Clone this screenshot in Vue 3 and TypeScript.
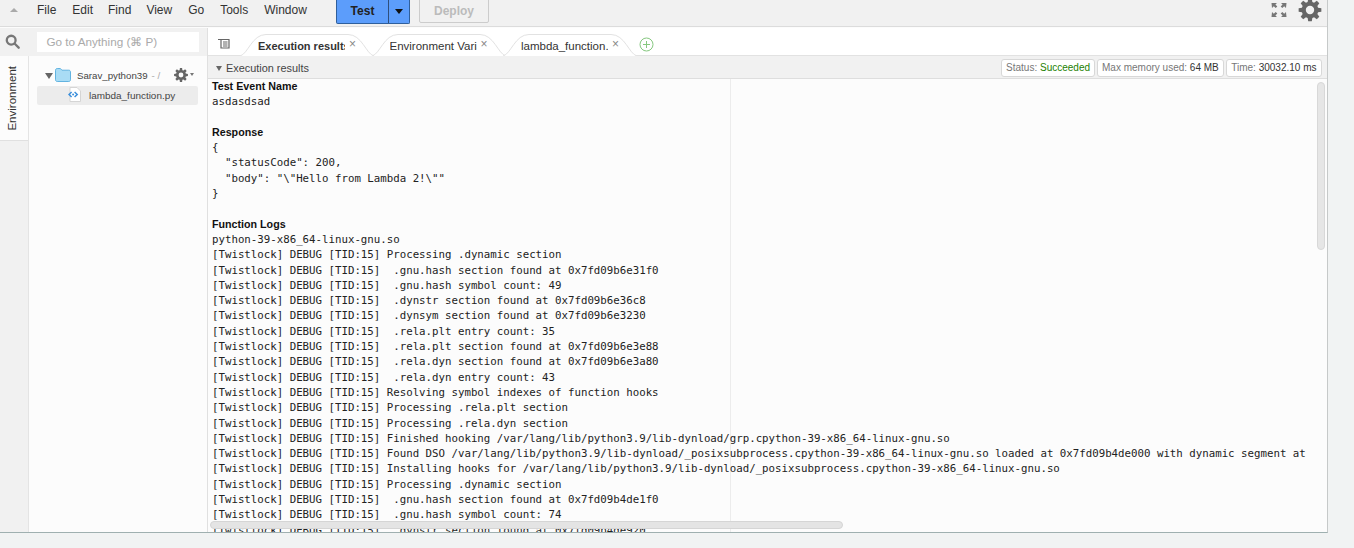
<script setup lang="ts">
const menus = ['File', 'Edit', 'Find', 'View', 'Go', 'Tools', 'Window']
const tabs = [
  { label: 'Execution results', active: true },
  { label: 'Environment Variables', active: false },
  { label: 'lambda_function.py', active: false },
]
const lines = [
  'python-39-x86_64-linux-gnu.so',
  '[Twistlock] DEBUG [TID:15] Processing .dynamic section',
  '[Twistlock] DEBUG [TID:15]  .gnu.hash section found at 0x7fd09b6e31f0',
  '[Twistlock] DEBUG [TID:15]  .gnu.hash symbol count: 49',
  '[Twistlock] DEBUG [TID:15]  .dynstr section found at 0x7fd09b6e36c8',
  '[Twistlock] DEBUG [TID:15]  .dynsym section found at 0x7fd09b6e3230',
  '[Twistlock] DEBUG [TID:15]  .rela.plt entry count: 35',
  '[Twistlock] DEBUG [TID:15]  .rela.plt section found at 0x7fd09b6e3e88',
  '[Twistlock] DEBUG [TID:15]  .rela.dyn section found at 0x7fd09b6e3a80',
  '[Twistlock] DEBUG [TID:15]  .rela.dyn entry count: 43',
  '[Twistlock] DEBUG [TID:15] Resolving symbol indexes of function hooks',
  '[Twistlock] DEBUG [TID:15] Processing .rela.plt section',
  '[Twistlock] DEBUG [TID:15] Processing .rela.dyn section',
  '[Twistlock] DEBUG [TID:15] Finished hooking /var/lang/lib/python3.9/lib-dynload/grp.cpython-39-x86_64-linux-gnu.so',
  '[Twistlock] DEBUG [TID:15] Found DSO /var/lang/lib/python3.9/lib-dynload/_posixsubprocess.cpython-39-x86_64-linux-gnu.so loaded at 0x7fd09b4de000 with dynamic segment at 0x7fd09b4e1d50',
  '[Twistlock] DEBUG [TID:15] Installing hooks for /var/lang/lib/python3.9/lib-dynload/_posixsubprocess.cpython-39-x86_64-linux-gnu.so',
  '[Twistlock] DEBUG [TID:15] Processing .dynamic section',
  '[Twistlock] DEBUG [TID:15]  .gnu.hash section found at 0x7fd09b4de1f0',
  '[Twistlock] DEBUG [TID:15]  .gnu.hash symbol count: 74',
  '[Twistlock] DEBUG [TID:15]  .dynstr section found at 0x7fd09b4de920',
]
const response = '{\n  "statusCode": 200,\n  "body": "\\"Hello from Lambda 2!\\""\n}'

function gearPath(cx: number, cy: number, outer: number, inner: number, hole: number, teeth: number): string {
  const pts: string[] = []
  const step = (Math.PI * 2) / teeth
  for (let i = 0; i < teeth; i++) {
    const a = i * step - Math.PI / 2
    const seq: [number, number][] = [
      [inner, a - step * 0.36],
      [outer, a - step * 0.2],
      [outer, a + step * 0.2],
      [inner, a + step * 0.36],
    ]
    for (const [r, t] of seq) {
      pts.push(`${(cx + r * Math.cos(t)).toFixed(2)} ${(cy + r * Math.sin(t)).toFixed(2)}`)
    }
  }
  const ring = `M${cx - hole} ${cy}a${hole} ${hole} 0 1 0 ${hole * 2} 0a${hole} ${hole} 0 1 0 ${-hole * 2} 0Z`
  return `M${pts.join('L')}Z${ring}`
}
const bigGear = gearPath(12, 12, 11.5, 8.4, 4.2, 8)
const smallGear = gearPath(7, 7, 7, 5, 2.4, 8)
</script>

<template>
  <div class="page">
    <div class="window">
      <header class="menubar">
        <span class="collapse"></span>
        <nav class="menus">
          <span v-for="m in menus" :key="m" class="menu">{{ m }}</span>
        </nav>
        <div class="test-group">
          <button class="test-btn">Test</button>
          <button class="test-caret"><span></span></button>
        </div>
        <button class="deploy">Deploy</button>
        <div class="spacer"></div>
        <svg class="fullscreen" width="16" height="16" viewBox="0 0 16 16" fill="#777">
          <path d="M0.5 1H6L4.4 2.6 6.3 4.5 4.7 6.1 2.8 4.2 1 6ZM15.5 1H10L11.6 2.6 9.7 4.5 11.3 6.1 13.2 4.2 15 6ZM0.5 15H6L4.4 13.4 6.3 11.5 4.7 9.9 2.8 11.8 1 10ZM15.5 15H10L11.6 13.4 9.7 11.5 11.3 9.9 13.2 11.8 15 10Z" />
        </svg>
        <svg class="settings" width="24" height="24" viewBox="0 0 24 24">
          <path :d="bigGear" fill="#666" fill-rule="evenodd" />
        </svg>
      </header>

      <div class="workspace">
        <aside class="sidebar">
          <div class="search-row">
            <div class="search-icon">
              <svg width="15" height="15" viewBox="0 0 17 17" fill="none" stroke="#777" stroke-width="2.6">
                <circle cx="7" cy="7" r="5" />
                <path d="M10.8 10.8L15.5 15.5" stroke-linecap="round" />
              </svg>
            </div>
            <div class="goto">Go to Anything (⌘ P)</div>
          </div>
          <div class="side-body">
            <div class="rail">
              <div class="env-tab"><span>Environment</span></div>
            </div>
            <div class="tree">
              <div class="tree-root">
                <span class="tree-caret"></span>
                <svg class="folder" width="16" height="14" viewBox="0 0 16 14">
                  <path d="M0.5 2.2C0.5 1.2 1.2 0.5 2.2 0.5H5.4L6.9 2.2H13.8C14.8 2.2 15.5 2.9 15.5 3.9V11.8C15.5 12.8 14.8 13.5 13.8 13.5H2.2C1.2 13.5 0.5 12.8 0.5 11.8Z" fill="#a9dcf5" stroke="#62b3e0" />
                </svg>
                <span class="root-name">Sarav_python39</span>
                <span class="root-path">- /</span>
                <svg class="tree-gear" width="14" height="14" viewBox="0 0 14 14">
                  <path :d="smallGear" fill="#666" fill-rule="evenodd" />
                </svg>
                <span class="gear-caret"></span>
              </div>
              <div class="tree-file">
                <svg class="file-icon" width="13" height="15" viewBox="0 0 13 15">
                  <path d="M2 0.5H9L12.5 4V14.5H2Z" fill="#fff" stroke="#d5d5d5" />
                  <path d="M3.6 5L1 7.5 3.6 10M6.6 5L9.2 7.5 6.6 10" fill="none" stroke="#3b8fdc" stroke-width="1.5" />
                  <circle cx="5.1" cy="7.5" r="1" fill="#3b8fdc" />
                </svg>
                <span>lambda_function.py</span>
              </div>
            </div>
          </div>
        </aside>

        <main class="main">
          <div class="tabstrip">
            <svg class="panel-icon" width="12" height="11" viewBox="0 0 12 11" fill="none" stroke="#666">
              <path d="M0 1.5H11.5M3 1.5V10H11V1.5M5 4H9.5M5 6H9.5M5 8H9.5" stroke-width="1.2" />
            </svg>
            <div v-for="t in tabs" :key="t.label" class="tab" :class="{ active: t.active }">
              <svg class="tab-shape" width="134" height="22" viewBox="0 0 134 22">
                <path d="M0 22C8 20 12 0.5 26 0.5H108C122 0.5 126 20 134 22" fill="#fff" stroke="#e2e2e2" />
              </svg>
              <span class="tab-label">{{ t.label }}</span>
              <span class="tab-x">×</span>
            </div>
            <svg class="add-tab" width="15" height="15" viewBox="0 0 15 15" fill="none" stroke="#86c87f">
              <circle cx="7.5" cy="7.5" r="6.5" />
              <path d="M7.5 4V11M4 7.5H11" />
            </svg>
          </div>

          <div class="resultbar">
            <span class="result-caret"></span>
            <span class="result-title">Execution results</span>
            <div class="spacer"></div>
            <div class="badges">
              <span class="badge">Status: <b class="ok">Succeeded</b></span>
              <span class="badge">Max memory used: <b>64 MB</b></span>
              <span class="badge">Time: <b>30032.10 ms</b></span>
            </div>
          </div>

          <div class="output">
            <div class="margin-line"></div>
            <div class="heading">Test Event Name</div>
            <pre class="mono">asdasdsad</pre>
            <div class="heading gap">Response</div>
            <pre class="mono">{{ response }}</pre>
            <div class="heading gap">Function Logs</div>
            <pre v-for="(l, i) in lines" :key="i" class="mono">{{ l }}</pre>
            <div class="vscroll"></div>
            <div class="hscroll"></div>
          </div>
        </main>
      </div>
    </div>
  </div>
</template>

<style>
html, body { margin: 0; padding: 0; overflow: hidden; }
</style>

<style scoped>
.page {
  width: 1354px;
  height: 548px;
  background: #f1f3f3;
  overflow: hidden;
  font-family: "Liberation Sans", Arial, sans-serif;
  color: #222;
}
.window {
  width: 1327px;
  height: 532px;
  box-sizing: content-box;
  border-right: 1px solid #c6c9c9;
  border-bottom: 1px solid #9fb0b0;
  background: #fcfcfc;
  display: flex;
  flex-direction: column;
  overflow: hidden;
}
.spacer { flex: 1; }

.menubar {
  height: 27px;
  flex: none;
  box-sizing: border-box;
  background: #f1f1f1;
  border-bottom: 1px solid #dcdcdc;
  display: flex;
  align-items: flex-start;
  padding-left: 10px;
}
.collapse {
  width: 0;
  height: 0;
  margin-top: 8px;
  border-left: 4px solid transparent;
  border-right: 4px solid transparent;
  border-bottom: 4px solid #aaa;
}
.menus {
  display: flex;
  margin-left: 19px;
  width: 299px;
  font-size: 12px;
  line-height: 20px;
  color: #333;
}
.menu { margin-right: 16px; }
.menu:nth-child(2), .menu:nth-child(3) { margin-right: 15px; }
.test-group {
  display: flex;
  height: 25px;
  margin-top: -1px;
  background: #5c9dfb;
  border: 1px solid #2f5f9c;
  border-top: none;
  border-radius: 0 0 2px 2px;
  box-sizing: border-box;
}
.test-btn {
  width: 52px;
  border: none;
  background: none;
  padding: 0;
  font: bold 12px "Liberation Sans", Arial, sans-serif;
  color: #222;
  border-right: 1px solid #2f4f7c;
}
.test-caret {
  width: 20px;
  border: none;
  background: none;
  padding: 0;
  display: flex;
  align-items: center;
  justify-content: center;
}
.test-caret span {
  width: 0;
  height: 0;
  border-left: 4px solid transparent;
  border-right: 4px solid transparent;
  border-top: 5px solid #111;
}
.deploy {
  width: 70px;
  height: 24px;
  margin-left: 9px;
  margin-top: -1px;
  box-sizing: border-box;
  border: 1px solid #ccc;
  border-radius: 0 0 2px 2px;
  background: #f1f1f1;
  font: bold 12px "Liberation Sans", Arial, sans-serif;
  color: #bbb;
  padding: 0;
}
.fullscreen { margin-top: 2px; margin-right: 11px; }
.settings { margin-top: -2px; margin-right: 5px; }

.workspace {
  flex: 1;
  min-height: 0;
  display: flex;
  margin-top: 1px;
}
.sidebar {
  width: 208px;
  flex: none;
  display: flex;
  flex-direction: column;
  border-right: 1px solid #e0e0e0;
  box-sizing: border-box;
}
.search-row {
  height: 28px;
  flex: none;
  display: flex;
  background: #f1f1f1;
  align-items: flex-start;
}
.search-icon {
  width: 37px;
  padding: 6px 0 0 5px;
  box-sizing: border-box;
  flex: none;
}
.goto {
  width: 162px;
  height: 20px;
  margin-top: 4px;
  background: #fff;
  font-size: 11.7px;
  line-height: 20px;
  color: #aaa;
  padding-left: 9.5px;
  box-sizing: border-box;
}
.side-body { flex: 1; display: flex; min-height: 0; }
.rail {
  width: 29px;
  flex: none;
  background: #f1f1f1;
  border-right: 1px solid #e4e4e4;
  box-sizing: border-box;
}
.env-tab {
  height: 85px;
  background: #fcfcfc;
  border-bottom: 1px solid #e0e0e0;
  display: flex;
  align-items: center;
  justify-content: center;
  box-sizing: border-box;
  padding-right: 4px;
}
.env-tab span {
  writing-mode: vertical-rl;
  transform: rotate(180deg);
  font-size: 11.5px;
  color: #333;
}
.tree { flex: 1; padding: 9px 9px 0 8px; background: #fcfcfc; }
.tree-root {
  height: 21px;
  display: flex;
  align-items: center;
  white-space: nowrap;
}
.tree-caret {
  width: 0;
  height: 0;
  margin-left: 8px;
  border-left: 4px solid transparent;
  border-right: 4px solid transparent;
  border-top: 6px solid #666;
}
.folder { margin-left: 2px; margin-bottom: 2px; flex: none; }
.root-name { margin-left: 6px; font-size: 9.7px; color: #444; }
.root-path { margin-left: 4px; font-size: 9.8px; color: #aaa; }
.tree-gear { margin-left: 14px; margin-bottom: 1px; flex: none; }
.gear-caret {
  width: 0;
  height: 0;
  margin-left: 2px;
  margin-bottom: 2px;
  border-left: 2.5px solid transparent;
  border-right: 2.5px solid transparent;
  border-top: 3px solid #777;
}
.tree-file {
  height: 19px;
  background: #ececec;
  border-radius: 2px;
  display: flex;
  align-items: center;
  font-size: 9.95px;
  color: #444;
  padding-left: 31px;
}
.file-icon { margin-right: 8px; margin-bottom: 2px; flex: none; }

.main {
  flex: 1;
  min-width: 0;
  display: flex;
  flex-direction: column;
}
.tabstrip {
  height: 28px;
  flex: none;
  box-sizing: border-box;
  border-bottom: 1px solid #e2e2e2;
  background: #fff;
  display: flex;
  align-items: flex-end;
  padding-left: 10px;
}
.panel-icon { align-self: flex-start; margin-top: 10px; flex: none; }
.tab {
  width: 134px;
  height: 22px;
  position: relative;
  flex: none;
  display: flex;
  align-items: center;
  margin-right: -2.5px;
  margin-bottom: -1px;
  font-size: 11.5px;
  color: #333;
}
.tab:first-of-type { margin-left: 10px; }
.tab.active { z-index: 2; font-weight: bold; font-size: 11px; }
.tab-shape { position: absolute; left: 0; top: 0; }
.tab-label {
  position: relative;
  margin-left: 18px;
  width: 87px;
  overflow: hidden;
  white-space: nowrap;
  line-height: 22px;
  padding-top: 1px;
}
.tab-x {
  position: relative;
  margin-left: 4px;
  font-size: 12px;
  font-weight: normal;
  color: #888;
  line-height: 18px;
  margin-top: -3px;
}
.add-tab { align-self: flex-start; margin: 9px 0 0 4px; flex: none; position: relative; z-index: 3; }

.resultbar {
  height: 23px;
  flex: none;
  box-sizing: border-box;
  background: #f1f1f1;
  border-bottom: 1px solid #dedede;
  display: flex;
  align-items: center;
  padding: 2px 5px 0 8px;
}
.result-caret {
  width: 0;
  height: 0;
  border-left: 3.5px solid transparent;
  border-right: 3.5px solid transparent;
  border-top: 5px solid #666;
}
.result-title { margin-left: 4px; font-size: 10.9px; color: #444; }
.badges { display: flex; gap: 2px; }
.badge {
  height: 18px;
  box-sizing: border-box;
  border: 1px solid #d8d8d8;
  border-radius: 3px;
  background: #fff;
  font-size: 10px;
  line-height: 16px;
  color: #777;
  padding: 0 4px;
  white-space: nowrap;
}
.badge:nth-child(3) { padding: 0 4.5px; }
.badge b { font-weight: normal; color: #333; }
.badge b.ok { color: #1d8102; }

.output {
  flex: 1;
  min-height: 0;
  position: relative;
  overflow: hidden;
  background: #fcfcfc;
  padding: 0 0 0 4px;
}
.margin-line {
  position: absolute;
  left: 522px;
  top: 0;
  bottom: 0;
  width: 1px;
  background: #ececec;
}
.heading {
  font-size: 10.7px;
  font-weight: bold;
  line-height: 15.3px;
  color: #111;
  position: relative;
}
.heading.gap { margin-top: 15.3px; }
.mono {
  margin: 0;
  font-family: "DejaVu Sans Mono", "Liberation Mono", monospace;
  font-size: 10.75px;
  line-height: 15.3px;
  color: #222;
  white-space: pre;
  position: relative;
  width: 1095px;
  overflow: hidden;
}
.vscroll {
  position: absolute;
  right: 2px;
  top: 3px;
  width: 8px;
  height: 168px;
  background: #e6e6e6;
  border: 1px solid #d8d8d8;
  border-radius: 4px;
  box-sizing: border-box;
}
.hscroll {
  position: absolute;
  left: 2px;
  bottom: 3px;
  width: 633px;
  height: 8px;
  background: #e4e4e4;
  border: 1px solid #d5d5d5;
  border-radius: 4px;
  box-sizing: border-box;
}
</style>
